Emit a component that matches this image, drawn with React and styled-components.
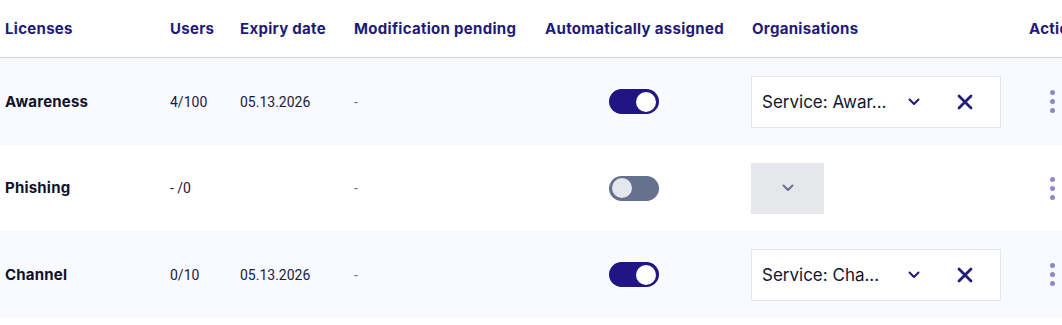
import styled, { createGlobalStyle } from 'styled-components';

const GlobalStyle = createGlobalStyle`
  html, body {
    margin: 0;
    padding: 0;
    background: #ffffff;
    overflow: hidden;
  }
  body {
    font-family: Inter, 'Noto Sans', sans-serif;
  }
`;

const columns = '165px 70px 114px 191px 207px 277px 100px';

const Table = styled.div`
  width: 1124px;
`;

const HeaderRow = styled.div`
  display: grid;
  grid-template-columns: ${columns};
  height: 57px;
  align-items: center;
  border-bottom: 1px solid #c5d3f4;
`;

const HeadCell = styled.div`
  padding-left: 5px;
  font-family: Inter, sans-serif;
  font-weight: 700;
  font-size: 15px;
  color: #1e1a78;
  white-space: nowrap;
  letter-spacing: 0.3px;
`;

const Row = styled.div`
  display: grid;
  grid-template-columns: ${columns};
  height: ${({ $h }) => $h}px;
  align-items: center;
  background: ${({ $striped }) => ($striped ? '#f9faff' : '#ffffff')};
`;

const Cell = styled.div`
  padding-left: ${({ $pad }) => ($pad ?? 5)}px;
  font-family: Roboto, sans-serif;
  font-size: 14px;
  color: #1a1a3a;
  white-space: nowrap;
  display: flex;
  align-items: center;
`;

const Name = styled(Cell)`
  font-family: Inter, sans-serif;
  font-weight: 700;
  font-size: 15px;
  color: #10112a;
  letter-spacing: 0.2px;
  padding-bottom: 1px;
`;

const Muted = styled.span`
  color: #6b7088;
`;

const Switch = styled.div`
  width: 50px;
  height: 25px;
  border-radius: 13px;
  background: ${({ $on }) => ($on ? '#1f1584' : '#66708f')};
  position: relative;
  box-sizing: border-box;

  &::after {
    content: '';
    position: absolute;
    top: 2.5px;
    ${({ $on }) => ($on ? 'right: 3px;' : 'left: 3px;')}
    width: 20px;
    height: 20px;
    border-radius: 50%;
    background: ${({ $on }) => ($on ? '#ffffff' : '#e6e7ee')};
  }
`;

const Select = styled.div`
  width: 250px;
  height: 52px;
  box-sizing: border-box;
  border: 1px solid #e3e4ec;
  background: #ffffff;
  display: flex;
  align-items: center;
  padding-left: 10px;
`;

const SelectText = styled.span`
  flex: 0 0 145px;
  font-family: Inter, sans-serif;
  font-size: 17px;
  color: #14142e;
`;

const IconSlot = styled.span`
  flex: 0 0 auto;
  display: flex;
  align-items: center;
  justify-content: center;
  width: ${({ $w }) => $w}px;
  margin-left: ${({ $gap }) => $gap ?? 0}px;
`;

const EmptySelect = styled.div`
  width: 73px;
  height: 51px;
  background: #e6e7eb;
  display: flex;
  align-items: center;
  justify-content: center;
`;

const Kebab = styled.div`
  display: flex;
  flex-direction: column;
  gap: 4px;

  span {
    width: 5px;
    height: 5px;
    border-radius: 50%;
    background: #8e88c6;
  }
`;

const Chevron = ({ color }) => (
  <svg width="12" height="8" viewBox="0 0 12 8">
    <path d="M1.5 1.5 L6 6 L10.5 1.5" fill="none" stroke={color} strokeWidth="2" strokeLinecap="round" strokeLinejoin="round" />
  </svg>
);

const Cross = () => (
  <svg width="16" height="16" viewBox="0 0 16 16">
    <path d="M2 2 L14 14 M14 2 L2 14" fill="none" stroke="#231c7d" strokeWidth="2.8" strokeLinecap="round" />
  </svg>
);

const rows = [
  { name: 'Awareness', users: '4/100', expiry: '05.13.2026', on: true, org: 'Service: Awar...', h: 87 },
  { name: 'Phishing', users: '- /0', expiry: '', on: false, org: null, h: 86 },
  { name: 'Channel', users: '0/10', expiry: '05.13.2026', on: true, org: 'Service: Cha...', h: 87 },
];

export default function App() {
  return (
    <>
      <GlobalStyle />
      <Table>
        <HeaderRow>
          <HeadCell>Licenses</HeadCell>
          <HeadCell>Users</HeadCell>
          <HeadCell>Expiry date</HeadCell>
          <HeadCell>Modification pending</HeadCell>
          <HeadCell>Automatically assigned</HeadCell>
          <HeadCell>Organisations</HeadCell>
          <HeadCell>Actions</HeadCell>
        </HeaderRow>
        {rows.map((r, i) => (
          <Row key={r.name} $h={r.h} $striped={i % 2 === 0}>
            <Name>{r.name}</Name>
            <Cell>{r.users}</Cell>
            <Cell>{r.expiry}</Cell>
            <Cell><Muted>-</Muted></Cell>
            <Cell $pad={69}><Switch $on={r.on} /></Cell>
            <Cell $pad={4}>
              {r.org ? (
                <Select>
                  <SelectText>{r.org}</SelectText>
                  <IconSlot $w={13}><Chevron color="#231c7d" /></IconSlot>
                  <IconSlot $w={16} $gap={37}><Cross /></IconSlot>
                </Select>
              ) : (
                <EmptySelect><Chevron color="#6b7090" /></EmptySelect>
              )}
            </Cell>
            <Cell $pad={26}>
              <Kebab><span /><span /><span /></Kebab>
            </Cell>
          </Row>
        ))}
      </Table>
    </>
  );
}
